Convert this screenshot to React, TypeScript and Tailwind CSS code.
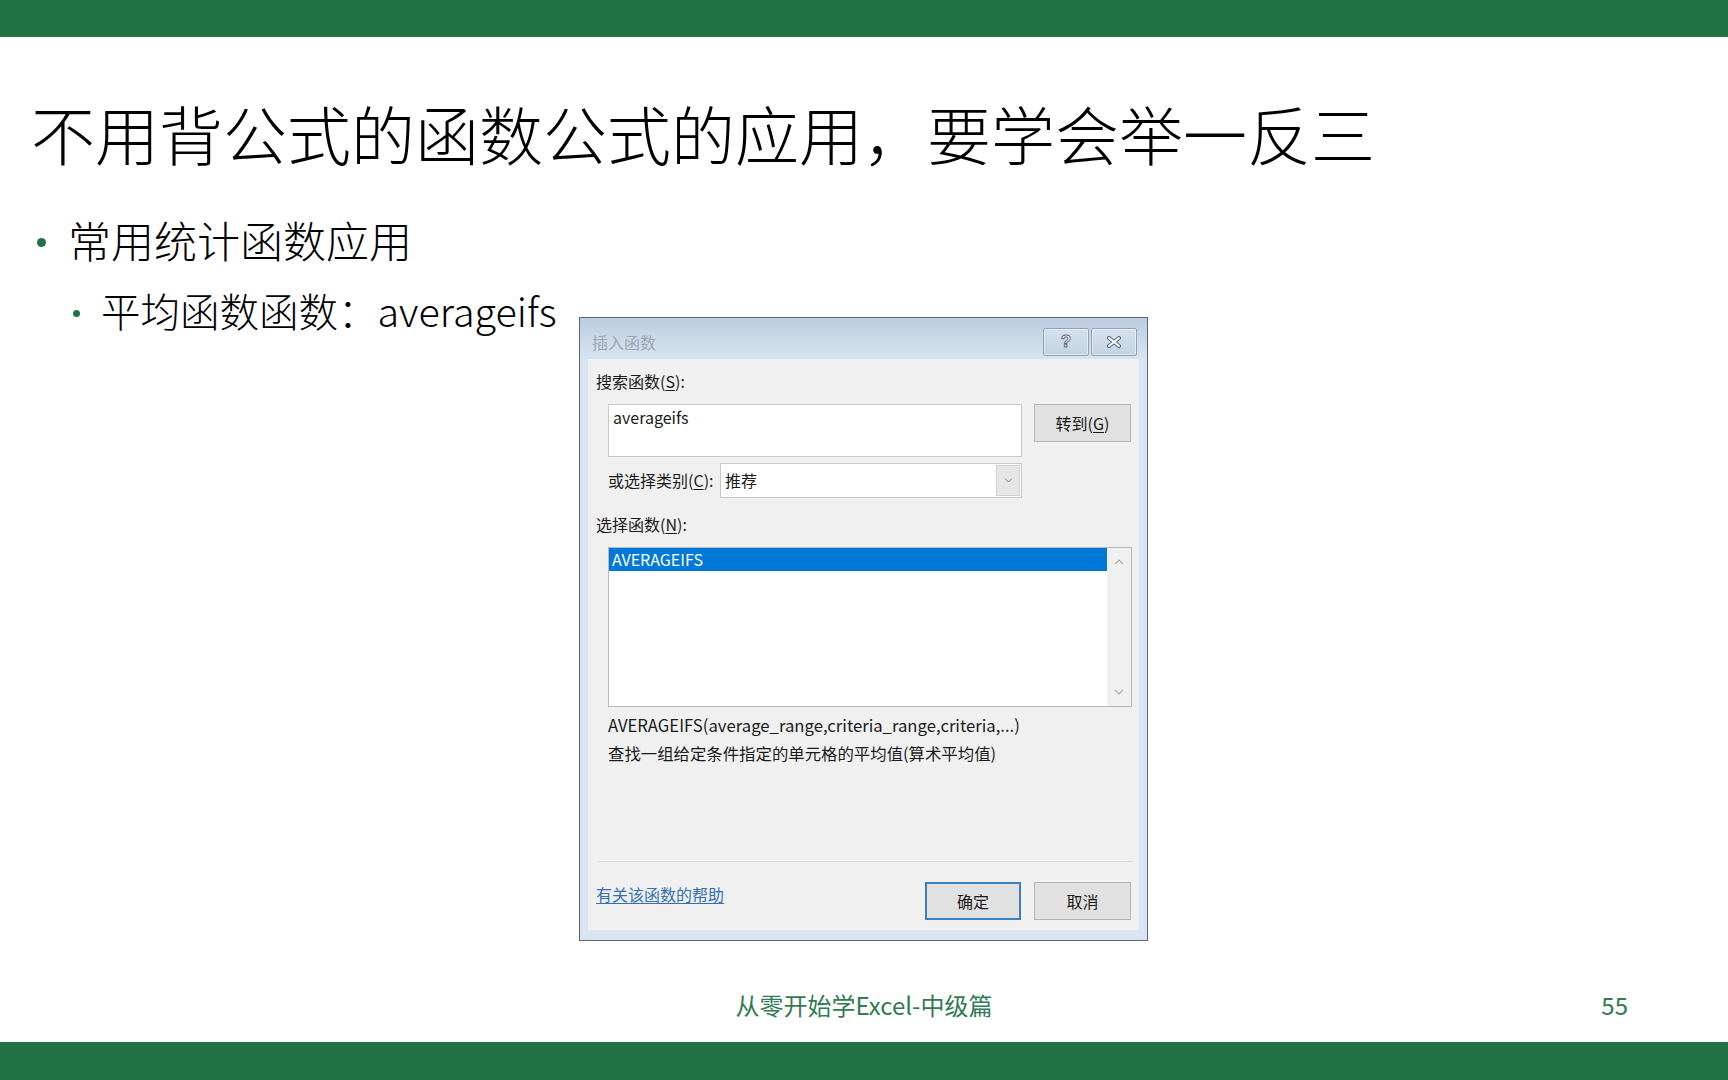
const CJK = "font-['Noto_Sans_CJK_SC','Noto_Sans',sans-serif]"

function Chevron({ up = false, className = '' }: { up?: boolean; className?: string }) {
  return (
    <svg viewBox="0 0 10 6" className={className} fill="none" stroke="currentColor" strokeWidth="1.2">
      {up ? <path d="M1 5.2 5 1.2 9 5.2" /> : <path d="M1 0.8 5 4.8 9 0.8" />}
    </svg>
  )
}

function TitleButton({ children }: { children: React.ReactNode }) {
  return (
    <div className="flex h-[28px] w-[46px] items-center justify-center rounded-[2px] border border-[#8fa3b8] bg-gradient-to-b from-[#d5e0ec] to-[#c3d3e4] shadow-[inset_0_0_0_1px_rgba(255,255,255,0.45)]">
      {children}
    </div>
  )
}

function InsertFunctionDialog() {
  return (
    <div className="ml-[579px] mt-[-13px] flex h-[624px] w-[569px] flex-col border border-[#5d6670] bg-[#d9e5f1]">
      {/* title bar */}
      <div className="flex h-[41px] shrink-0 items-start bg-gradient-to-b from-[#bccde0] to-[#d7e4f0]">
        <span className="ml-[12px] mt-[16px] text-[16px] leading-none text-[#9ea7b1]">插入函数</span>
        <div className="ml-auto mr-[10px] mt-[10px] flex gap-[2px]">
          <TitleButton>
            <span className="text-[17px] font-bold leading-none text-white [-webkit-text-stroke:1px_#5e6e80] font-['Liberation_Sans',sans-serif]">
              ?
            </span>
          </TitleButton>
          <TitleButton>
            <svg viewBox="0 0 16 12" className="h-[12px] w-[16px]">
              <path d="M3 2 13 10M13 2 3 10" stroke="#56667a" strokeWidth="4" strokeLinecap="round" />
              <path d="M3 2 13 10M13 2 3 10" stroke="#ffffff" strokeWidth="2" strokeLinecap="round" />
            </svg>
          </TitleButton>
        </div>
      </div>

      {/* client area */}
      <div className="mx-[8px] mb-[10px] flex flex-1 flex-col bg-[#f0f0f0] text-[16px] text-[#1a1a1a]">
        <div className="ml-[8px] mt-[14px] leading-none">
          搜索函数(<span className="underline underline-offset-2">S</span>):
        </div>

        <div className="ml-[20px] mt-[15px] flex items-start">
          <div className="h-[53px] w-[414px] border border-[#c8c8c8] bg-white px-[4px] pt-[2px] leading-[20px]">
            averageifs
          </div>
          <button className="ml-[12px] h-[38px] w-[97px] border border-[#b4b4b4] bg-[#e1e1e1] leading-none">
            转到(<span className="underline underline-offset-2">G</span>)
          </button>
        </div>

        <div className="ml-[20px] mt-[6px] flex h-[35px] items-center">
          <span className="w-[112px] leading-none">
            或选择类别(<span className="underline underline-offset-2">C</span>):
          </span>
          <div className="flex h-[35px] w-[302px] items-stretch border border-[#c8c8c8] bg-white">
            <span className="flex-1 self-center px-[4px] leading-none">推荐</span>
            <div className="my-[1px] mr-[1px] flex w-[24px] items-center justify-center border border-[#cfcfcf] bg-[#e6e6e6] text-[#7a7a7a]">
              <Chevron className="h-[5px] w-[9px]" />
            </div>
          </div>
        </div>

        <div className="ml-[8px] mt-[18px] leading-none">
          选择函数(<span className="underline underline-offset-2">N</span>):
        </div>

        <div className="ml-[20px] mt-[15px] flex h-[160px] w-[524px] border border-[#b9b9b9] bg-white">
          <div className="flex-1">
            <div className="h-[23px] bg-[#0078d7] pl-[3px] leading-[23px] text-white">AVERAGEIFS</div>
          </div>
          <div className="flex w-[24px] flex-col items-center justify-between bg-[#f0f0f0] py-[11px] text-[#a8a8a8]">
            <Chevron up className="h-[6px] w-[10px]" />
            <Chevron className="h-[6px] w-[10px]" />
          </div>
        </div>

        <div className="ml-[20px] mt-[4px] text-[16.7px] leading-[28px]">
          AVERAGEIFS(average_range,criteria_range,criteria,...)
        </div>
        <div className="ml-[20px] text-[16.4px] leading-[28px]">查找一组给定条件指定的单元格的平均值(算术平均值)</div>

        <div className="ml-[9px] mt-[94px] h-px w-[536px] bg-[#dcdcdc]" />

        <div className="mt-[20px] flex h-[38px] items-center">
          <a className="mb-[14px] ml-[8px] leading-none text-[#3271b5] underline underline-offset-2">有关该函数的帮助</a>
          <button className="ml-auto h-[38px] w-[96px] border-2 border-[#3c7fbf] bg-[#e1e1e1] leading-none">
            确定
          </button>
          <button className="ml-[13px] mr-[8px] h-[38px] w-[97px] border border-[#b4b4b4] bg-[#e1e1e1] leading-none">
            取消
          </button>
        </div>
      </div>
    </div>
  )
}

export default function App() {
  return (
    <div className={`flex h-[1080px] w-[1728px] flex-col overflow-hidden bg-white ${CJK}`}>
      <div className="h-[37px] shrink-0 bg-[#217346]" />

      <div className="flex flex-1 flex-col">
        <h1 className="ml-[31px] mt-[63px] text-[64px] font-light leading-none text-black">
          不用背公式的函数公式的应用，要学会举一反三
        </h1>

        <div className="mt-[54px] flex items-center">
          <span className="ml-[37px] h-[9px] w-[9px] translate-y-[3px] rounded-full bg-[#217346]" />
          <span className="ml-[22px] text-[43px] font-light leading-none text-black">常用统计函数应用</span>
        </div>

        <div className="mt-[29px] flex items-center">
          <span className="ml-[73px] h-[7px] w-[7px] translate-y-[4px] rounded-full bg-[#217346]" />
          <span className="ml-[21px] text-[39.5px] font-light leading-none text-black">平均函数函数：averageifs</span>
        </div>

        <InsertFunctionDialog />
      </div>

      <div className="grid h-[72px] shrink-0 grid-cols-[1fr_auto_1fr] items-start pt-[23px] text-[24px] leading-none text-[#347a55]">
        <span />
        <span>从零开始学Excel-中级篇</span>
        <span className="justify-self-end pr-[100px]">55</span>
      </div>

      <div className="h-[38px] shrink-0 bg-[#217346]" />
    </div>
  )
}
